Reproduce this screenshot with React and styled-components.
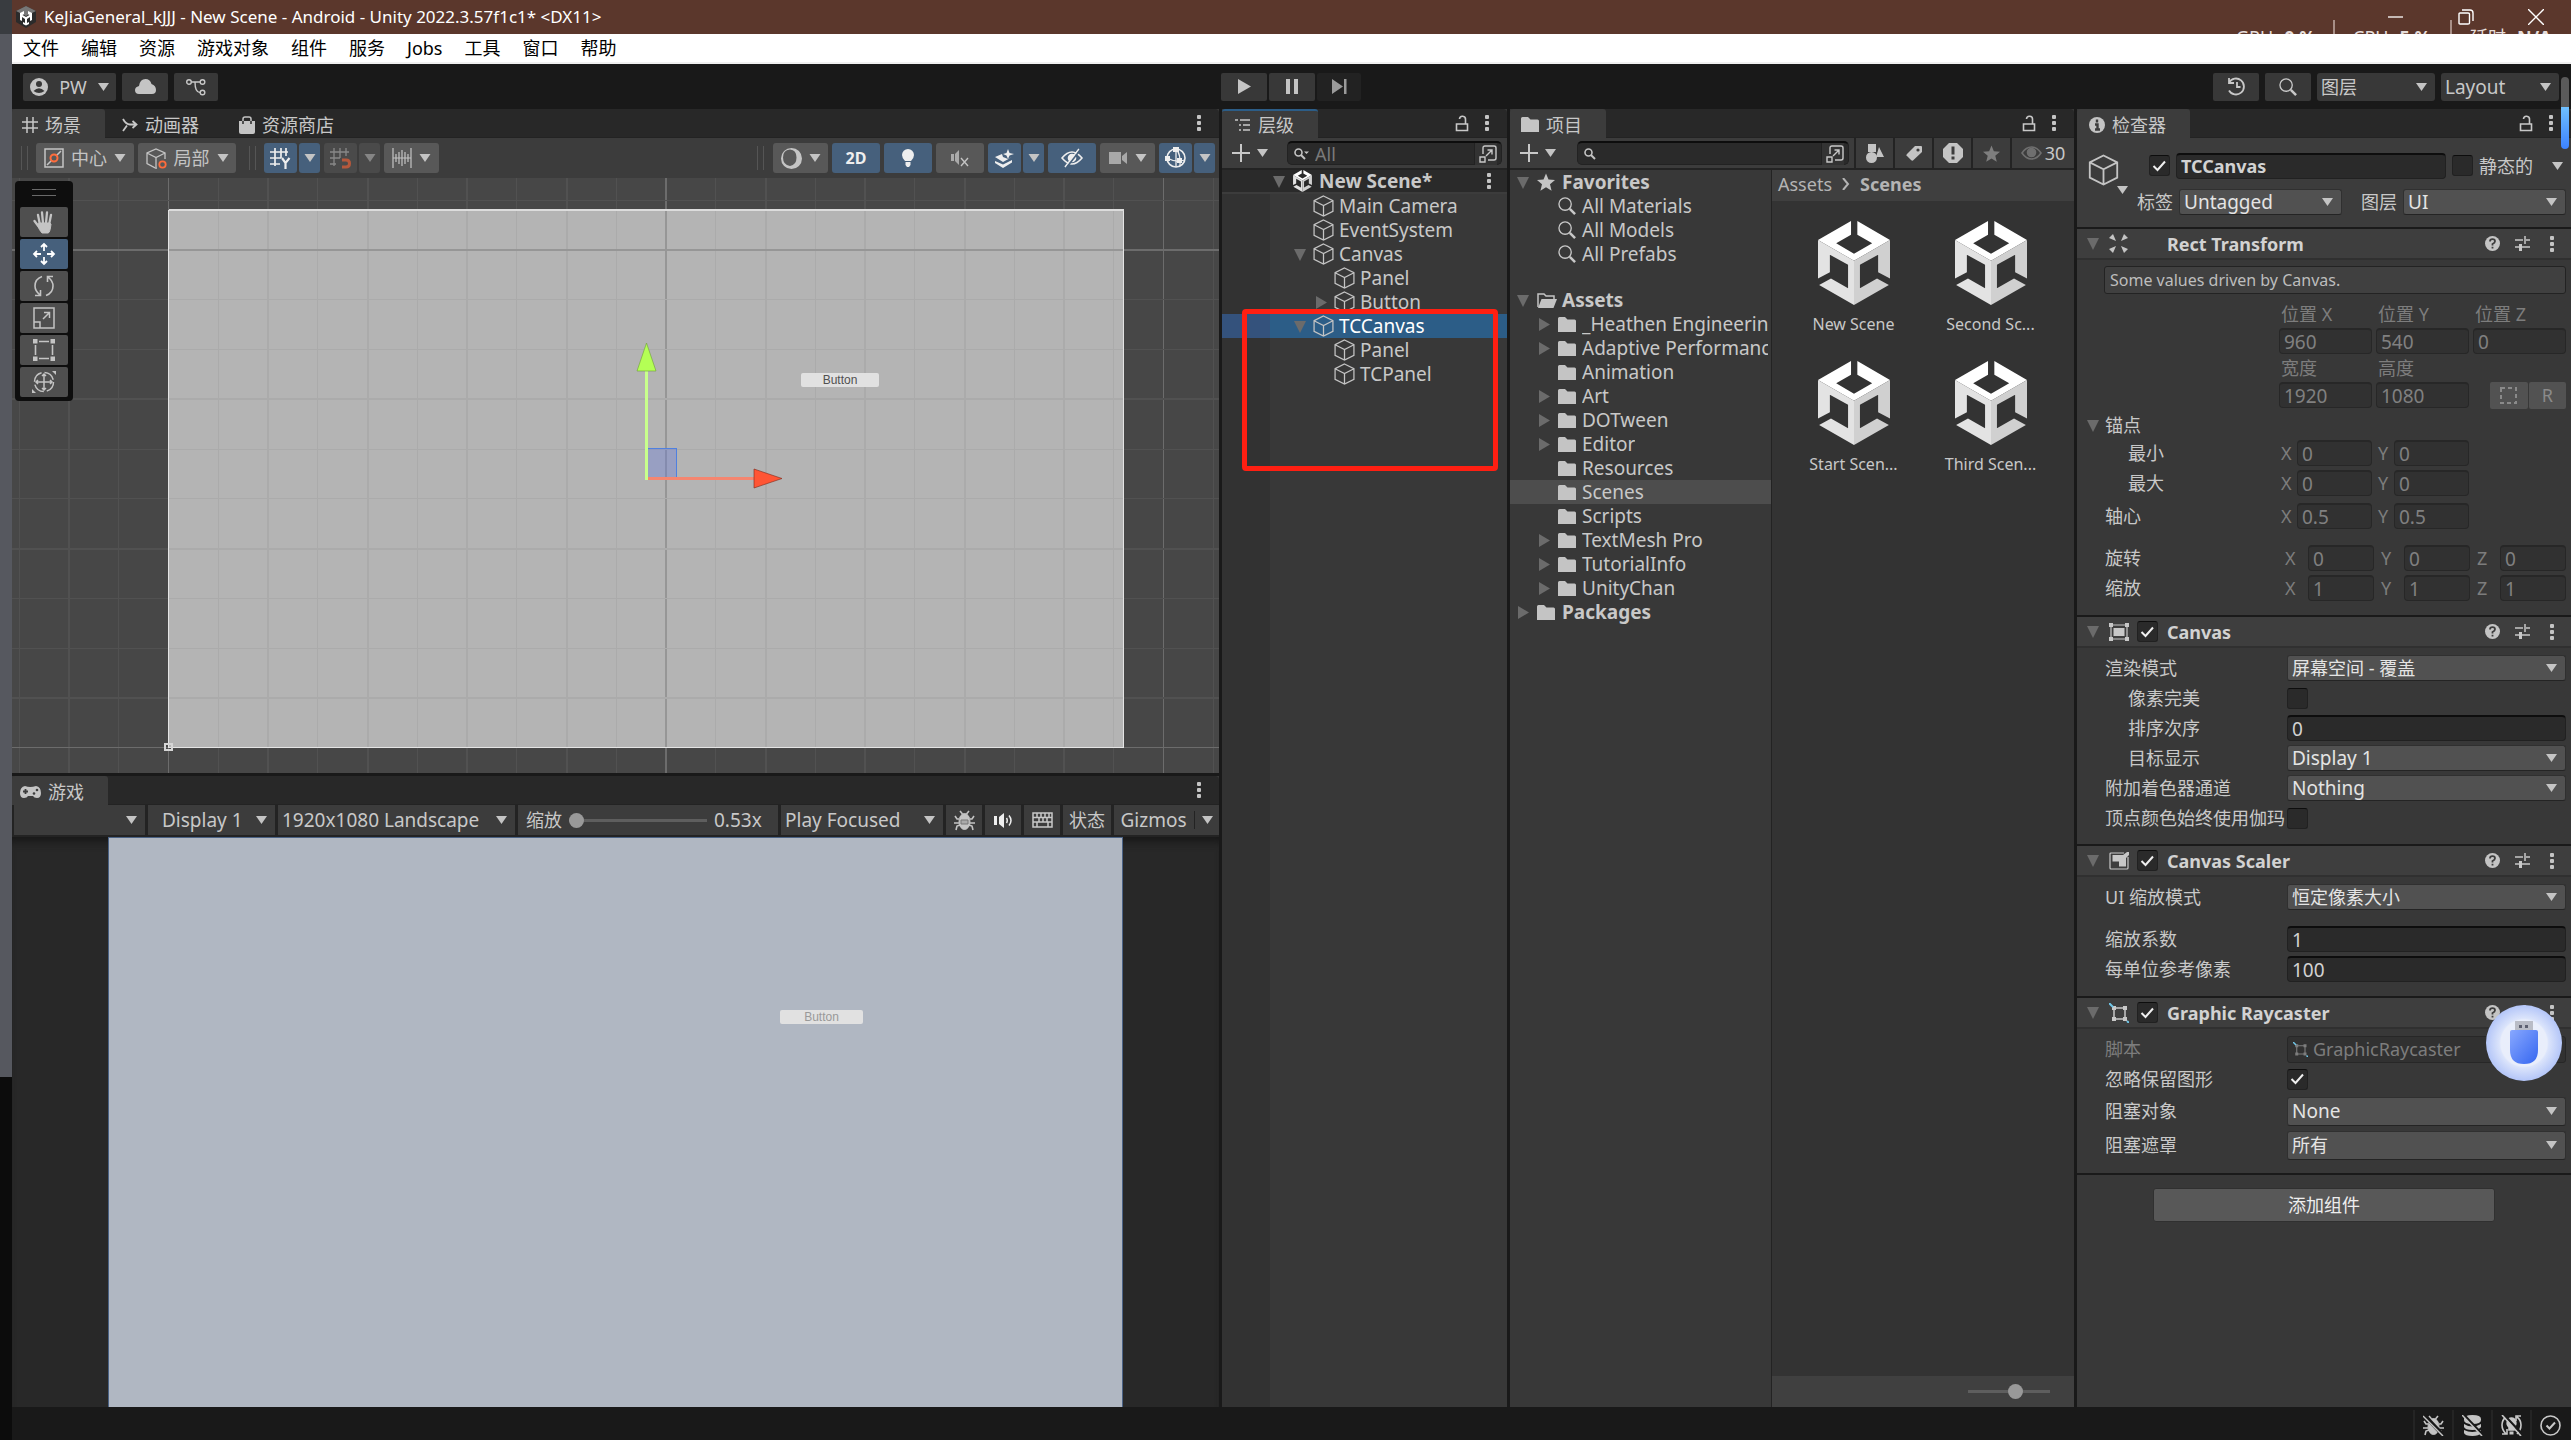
import React, { useId } from "react";
import styled, { createGlobalStyle, css } from "styled-components";

const GlobalStyle = createGlobalStyle`
  * {
    box-sizing: border-box;
  }
  body {
    margin: 0;
    background: #191919;
    color: #c8c8c8;
    font-family: "Noto Sans", "Noto Sans CJK SC", sans-serif;
    font-size: 18px;
    line-height: 24px;
  }
  button, input, select {
    margin: 0;
    padding: 0;
    border: 0;
    color: inherit;
    font: inherit;
  }
  svg {
    display: block;
    flex: none;
  }
`;

/* ---------- window ---------- */

const Screen = styled.div`
  min-height: 100vh;
  display: flex;
`;

const Edge = styled.div`
  width: 12px;
  flex: none;
  display: flex;
  flex-direction: column;
  background: #0c0c0c;
`;

const EdgeTop = styled.div`
  height: 34px;
  background: #393c40;
`;

const EdgeMiddle = styled.div`
  flex: 1043;
  background: #56585f;
`;

const EdgeBottom = styled.div`
  flex: 363;
`;

const Window = styled.div`
  flex: 1;
  min-width: 0;
  display: flex;
  flex-direction: column;
`;

const TitleBar = styled.header`
  position: relative;
  height: 34px;
  padding-left: 3px;
  display: flex;
  align-items: center;
  gap: 7px;
  overflow: hidden;
  background: #5b372c;
  color: #fff;
  font-size: 17px;
`;

const WindowButtons = styled.div`
  margin-left: auto;
  display: flex;
`;

const WindowButton = styled.button`
  width: 70px;
  height: 32px;
  display: grid;
  place-items: center;
  background: none;
`;

const Monitor = styled.div`
  position: absolute;
  top: 20px;
  right: 4px;
  display: flex;
  color: #e6dedb;
  font-size: 18px;
  line-height: 34px;
`;

const MonitorItem = styled.span`
  width: 117px;
  padding-left: 18px;
  display: flex;
  gap: 11px;
  border-left: 2px solid ${(p) => (p.$first ? "transparent" : "#a88f87")};
  white-space: nowrap;
`;

const MenuBar = styled.nav`
  height: 30px;
  padding-left: 11px;
  display: flex;
  align-items: center;
  gap: 22px;
  background: #fff;
  border-bottom: 2px solid #f0f0f0;
`;

const MenuItem = styled.button`
  background: none;
  color: #000;
`;

const MainBar = styled.div`
  height: 45px;
  padding: 0 12px 0 11px;
  display: grid;
  grid-template-columns: 1fr auto 1fr;
  align-items: center;
  background: #191919;
`;

const BarGroup = styled.div`
  display: flex;
  gap: ${(p) => p.$gap || 6}px;
  justify-content: ${(p) => (p.$end ? "flex-end" : "flex-start")};
`;

const BarButton = styled.button`
  width: ${(p) => p.$w || 46}px;
  height: 28px;
  display: flex;
  align-items: center;
  justify-content: center;
  gap: 11px;
  border-radius: 2px;
  background: ${(p) => (p.$dim ? "#222" : "#383838")};
`;

const Panels = styled.div`
  flex: 1;
  display: grid;
  grid-template-columns: 1207fr 285fr 564fr 494fr;
  gap: 3px;
`;

const Column = styled.div`
  min-width: 0;
  display: flex;
  flex-direction: column;
  gap: 3px;
`;

const Panel = styled.section`
  flex: ${(p) => p.$grow || 1} 1 0;
  min-width: 0;
  min-height: 0;
  display: flex;
  flex-direction: column;
  background: #383838;
`;

const TabBar = styled.div`
  height: 29px;
  flex: none;
  padding-right: ${(p) => p.$right || 12}px;
  display: flex;
  align-items: center;
  gap: 16px;
  background: #282828;
  border-bottom: 1px solid #232323;
  border-radius: 4px 4px 0 0;
`;

const Tabs = styled.div`
  flex: 1;
  align-self: stretch;
  margin-bottom: -1px;
  display: flex;
`;

const Tab = styled.button`
  padding: 0 ${(p) => p.$pad || 24}px 0 ${(p) => p.$left || 11}px;
  display: flex;
  align-items: center;
  gap: 7px;
  background: ${(p) => (p.$active ? "#3c3c3c" : "none")};
  border-top: 2px solid ${(p) => (p.$focus ? "#2c5d87" : "transparent")};
  border-radius: 3px 3px 0 0;
`;

const IconButton = styled.button`
  display: grid;
  place-items: center;
  background: none;
`;

/* ---------- shared controls ---------- */

const Pick = styled.label`
  min-width: 0;
  flex: ${(p) => (p.$w ? "none" : 1)};
  width: ${(p) => (p.$w ? p.$w + "px" : "auto")};
  height: ${(p) => p.$h || 26}px;
  display: grid;
  align-items: center;
  background: ${(p) => p.$bg || "#515151"};
  border: ${(p) => (p.$bg ? "0" : "1px solid #303030")};
  border-bottom-color: #242424;
  border-radius: ${(p) => (p.$flat ? 0 : 3)}px;
  font-size: ${(p) => (p.$cjk ? 18 : 19)}px;

  select {
    grid-area: 1 / 1;
    width: 100%;
    height: 24px;
    padding-left: ${(p) => p.$pad || 4}px;
    appearance: none;
    background: none;
    color: ${(p) => (p.$bg ? "#c8c8c8" : "#e4e4e4")};
    line-height: 24px;
  }
  svg {
    grid-area: 1 / 1;
    justify-self: end;
    margin-right: ${(p) => p.$right || 8}px;
    pointer-events: none;
  }
`;

const TextBox = styled.input`
  flex: 1;
  min-width: 0;
  width: 100%;
  height: 26px;
  padding: 0 4px;
  background: #2a2a2a;
  border: 1px solid #212121;
  border-top: 2px solid #0d0d0d;
  border-radius: 4px;
  color: #d2d2d2;
  font-size: 19px;
  font-weight: ${(p) => (p.$bold ? 700 : 400)};

  &:disabled {
    background: #313131;
    border-color: #272727;
    color: #808080;
  }
`;

const NameBox = styled(TextBox)`
  font-size: 18px;
`;

const TickBox = styled.span`
  width: 21px;
  height: 21px;
  flex: none;
  display: grid;

  input {
    grid-area: 1 / 1;
    width: 21px;
    height: 21px;
    appearance: none;
    background: #2a2a2a;
    border: 1px solid #212121;
    border-top-color: #0d0d0d;
    border-radius: 3px;
  }
  svg {
    grid-area: 1 / 1;
    place-self: center;
    pointer-events: none;
  }
`;

const Slider = styled.input`
  width: ${(p) => p.$w}px;
  height: 16px;
  appearance: none;
  background: linear-gradient(#5e5e5e, #5e5e5e) center / 100% 3px no-repeat;

  &::-webkit-slider-thumb {
    appearance: none;
    width: 15px;
    height: 15px;
    border-radius: 50%;
    background: #999;
  }
`;

/* ---------- icons ---------- */

const Icon = ({ s = 20, h, box = 20, children, ...rest }) => (
  <svg
    width={s}
    height={h || s}
    viewBox={`0 0 ${box} ${box}`}
    fill="none"
    stroke="currentColor"
    strokeWidth="1.6"
    {...rest}
  >
    {children}
  </svg>
);

const Down = ({ w = 11, color = "#c4c4c4" }) => (
  <svg width={w} height="8" viewBox="0 0 11 8">
    <path d="M0 0H11L5.5 8Z" fill={color} />
  </svg>
);

const Fold = ({ open }) => (
  <svg width="12" height="13" viewBox="0 0 12 13">
    <path d={open ? "M0 1H12L6 13Z" : "M1 0L12 6.5L1 13Z"} fill="#6b6b6b" />
  </svg>
);

const Kebab = () => (
  <svg width="4" height="16" viewBox="0 0 4 16" fill="#c4c4c4">
    <rect width="4" height="4" rx="1" />
    <rect y="6" width="4" height="4" rx="1" />
    <rect y="12" width="4" height="4" rx="1" />
  </svg>
);

const Lock = () => (
  <Icon s={14} h={17} viewBox="0 0 14 17">
    <path d="M1.5 9h11v6.5h-11zM10.500 9V4.500a3 3 0 0 0-6-.5" />
  </Icon>
);

const Cube = ({ s = 21 }) => (
  <Icon s={s} h={s + 1} viewBox="0 0 20 21" strokeWidth="1.2" stroke="#c4c4c4">
    <path d="M10 1L19 5.500V15.500L10 20L1 15.500V5.500ZM1 5.500L10 10L19 5.500M10 10V20" />
  </Icon>
);

const Tick = () => (
  <svg width="15" height="12" viewBox="0 0 15 12">
    <path d="M1.500 6L5.500 10L13 1.500" fill="none" stroke="#f0f0f0" strokeWidth="2" />
  </svg>
);

const UnityLogo = ({ w = 72 }) => (
  <svg width={w} height={Math.round((w * 226) / 194)} viewBox="0 0 194 226">
    <path d="M0 51L89 0V37L49 60L97 88L146 60L106 37V0L194 51L97 107Z" fill="#fff" />
    <path d="M0 51L97 107V226L3 172L35 155L81 181V118L32 91V138L0 155Z" fill="#e3e3e3" />
    <path d="M194 51L97 107V226L191 172L159 155L113 181V118L162 91V138L194 155Z" fill="#d0d0d0" />
  </svg>
);

const Folder = () => (
  <svg width="18" height="15" viewBox="0 0 18 15">
    <path d="M0 1.500Q0 0 1.500 0H7L9.500 2.500H16.500Q18 2.500 18 4V15H0Z" fill="#c4c4c4" />
  </svg>
);

const FolderOpen = () => (
  <svg width="20" height="15" viewBox="0 0 20 15">
    <path d="M1 14V1H7L9 3H17V6" fill="none" stroke="#c4c4c4" strokeWidth="1.500" />
    <path d="M4.500 6H20L16.500 15H1Z" fill="#c4c4c4" />
  </svg>
);

const Star = ({ color = "#c4c4c4", s = 18 }) => (
  <svg width={s} height={s} viewBox="0 0 18 18">
    <path d="M9 0.500L11.500 6.600L18 7.100L13 11.300L14.600 17.700L9 14.200L3.400 17.700L5 11.300L0 7.100L6.500 6.600Z" fill={color} />
  </svg>
);

const Lens = ({ s = 19 }) => (
  <Icon s={s} viewBox="0 0 19 19" strokeWidth="1.4">
    <circle cx="7.500" cy="7.500" r="6.500" />
    <path d="M12.500 12.500L18 18" strokeWidth="2.600" />
  </Icon>
);

const LensSmall = ({ menu }) => (
  <svg width="15" height="12" viewBox="0 0 15 12" fill="none" stroke="#c4c4c4">
    <circle cx="4.500" cy="4.500" r="3.500" strokeWidth="1.600" />
    <path d="M7 7L11 11" strokeWidth="2" />
    {menu && <path d="M10 3.500H15L12.500 6Z" fill="#c4c4c4" stroke="none" />}
  </svg>
);

const Plus = () => (
  <Icon s={18} viewBox="0 0 18 18" strokeWidth="2">
    <path d="M9 0V18M0 9H18" />
  </Icon>
);

const PopOut = () => (
  <Icon s={18} viewBox="0 0 18 18" strokeWidth="1.4">
    <path d="M4 9V3Q4 1 6 1H15Q17 1 17 3V13Q17 15 15 15H9M1 12H6V17H1ZM7 11L13 5M8.500 5H13V9.500" />
  </Icon>
);

const GridIcon = () => (
  <Icon s={16} viewBox="0 0 16 16" strokeWidth="1.5">
    <path d="M5 0V16M11 0V16M0 5H16M0 11H16" />
  </Icon>
);

const Animator = () => (
  <Icon s={16} viewBox="0 0 16 16" strokeWidth="1.8">
    <path d="M1 2Q4 7.500 8 7.500H14M1 14L5 8.500M10.500 4L14.500 7.500L10.500 11" />
  </Icon>
);

const Bag = () => (
  <svg width="16" height="18" viewBox="0 0 16 18">
    <path d="M0 5H16V16Q16 18 14 18H2Q0 18 0 16Z" fill="#c4c4c4" />
    <path d="M4 8V3Q4 1 6 1H10Q12 1 12 3V8" fill="none" stroke="#c4c4c4" strokeWidth="1.500" />
    <path d="M4 5V8M12 5V8" stroke="#282828" strokeWidth="1.500" />
  </svg>
);

const ListIcon = () => (
  <Icon s={16} h={14} viewBox="0 0 16 14" strokeWidth="1.6">
    <path d="M0 2H3M5 2H15M4 7H6M8 7H15M4 12H6M8 12H15" />
  </Icon>
);

const Info = () => (
  <svg width="16" height="16" viewBox="0 0 16 16">
    <circle cx="8" cy="8" r="8" fill="#c4c4c4" />
    <path d="M8 2.500V5.500M6 7.500H8.500V12.500M6 12.500H11" stroke="#3c3c3c" strokeWidth="2.400" fill="none" />
  </svg>
);

const Gamepad = () => (
  <svg width="21" height="12" viewBox="0 0 21 12">
    <path d="M5 0Q10 2 16 0Q21 1 21 7Q21 12 17 12Q14 12 13 10H8Q7 12 4 12Q0 12 0 7Q0 1 5 0Z" fill="#c4c4c4" />
    <path d="M5.500 3V8M3 5.500H8" stroke="#3c3c3c" strokeWidth="1.800" />
    <circle cx="17" cy="4" r="1.300" fill="#3c3c3c" />
    <circle cx="14" cy="7.500" r="1.300" fill="#3c3c3c" />
  </svg>
);

const Help = () => (
  <svg width="15" height="15" viewBox="0 0 15 15">
    <circle cx="7.500" cy="7.500" r="7.500" fill="#c4c4c4" />
    <path d="M5 5.500Q5 3.200 7.500 3.200Q10 3.200 10 5.300Q10 6.800 7.500 8V9.500M7.500 10.800V12.600" stroke="#3c3c3c" strokeWidth="1.800" fill="none" />
  </svg>
);

const Preset = () => (
  <Icon s={15} viewBox="0 0 15 15" strokeWidth="1.5">
    <path d="M0 4H8M11 4H15M10 0V8M0 11H4M7 11H15" />
    <path d="M5.500 8V15" strokeWidth="3" />
  </Icon>
);

const Bug = ({ off }) => (
  <svg width="21" height="21" viewBox="0 0 21 21" fill="#c4c4c4" stroke="#c4c4c4">
    <ellipse cx="10.500" cy="11.500" rx="5.500" ry="8" />
    <path d="M6 1L8.500 4M15 1L12.500 4M1 6L3 9H5M20 6L18 9H16M0 13H5M21 13H16M2 20L3 16L6 15M19 20L18 16L15 15" fill="none" strokeWidth="1.600" />
    {off ? <path d="M1 0L20 20" stroke="#191919" strokeWidth="4" /> : <path d="M7 10H14V14H7Z" fill="#aaa" stroke="#777" />}
    {off && <path d="M0 1L20 21" strokeWidth="1.500" />}
  </svg>
);

/* ---------- scene view ---------- */

const SceneTools = styled.div`
  height: 40px;
  flex: none;
  padding: 0 4px 0 9px;
  display: flex;
  align-items: center;
  gap: 4px;
  background: #3c3c3c;
`;

const Spring = styled.div`
  flex: 1;
`;

const Grip = styled.div`
  width: 7px;
  height: 24px;
  margin: 0 ${(p) => p.$after || 4}px 0 ${(p) => p.$before || 0}px;
  border: solid #555;
  border-width: 0 1px;
`;

const Split = styled.div`
  display: flex;
  gap: 2px;
`;

const ToolButton = styled.button`
  width: ${(p) => p.$w || 48}px;
  height: 30px;
  display: flex;
  align-items: center;
  justify-content: center;
  gap: 7px;
  border-radius: 3px;
  background: ${(p) => (p.$on ? "#46607c" : p.$off ? "#4a4a4a" : "#585858")};
  color: ${(p) => (p.$on ? "#eee" : "#c4c4c4")};
  font-size: ${(p) => (p.$small ? 16 : 18)}px;
  font-weight: ${(p) => (p.$small ? 700 : 400)};
`;

const SceneView = styled.div`
  position: relative;
  flex: 1;
  overflow: hidden;
  background: #474747;
`;

const SceneDrawing = styled.svg`
  position: absolute;
  inset: 0;
  width: 100%;
  height: 100%;
`;

const MiniButton = styled.button`
  position: absolute;
  left: ${(p) => p.$x}px;
  top: ${(p) => p.$y}px;
  width: ${(p) => p.$w}px;
  height: 14px;
  background: #e1e1e1;
  color: ${(p) => (p.$dim ? "#999" : "#505050")};
  border-radius: 2px;
  font-family: "Liberation Sans", sans-serif;
  font-size: 12px;
  line-height: 14px;
`;

const Palette = styled.div`
  position: absolute;
  left: 3px;
  top: 3px;
  padding: 8px 5px 4px;
  display: flex;
  flex-direction: column;
  gap: 2px;
  background: #0e0e0e;
  border-radius: 4px;
`;

const PaletteGrip = styled.div`
  width: 24px;
  height: 7px;
  margin: 0 auto 9px;
  border: solid #6a6a6a;
  border-width: 1px 0;
`;

const PaletteButton = styled.button`
  width: 48px;
  height: 30px;
  display: grid;
  place-items: center;
  background: ${(p) => (p.$on ? "#46607c" : "#4f4f4f")};
  color: ${(p) => (p.$on ? "#fff" : "#c4c4c4")};
  border-radius: 2px;
`;

const GRID = 49.75;
const columns = Array.from({ length: 26 }, (_, i) => i - 3);
const rows = Array.from({ length: 13 }, (_, i) => i - 1);

// every other line is drawn two pixels wide
const lineWidth = (k) => (k % 2 === 0 && k !== 0 ? 2 : 1);

const GridLines = ({ faint, strong }) => (
  <g shapeRendering="crispEdges">
    {columns.map((k) => (
      <path key={"c" + k} d={`M${156.5 + k * GRID} 0V2000`} stroke={k % 10 ? faint : strong} strokeWidth={k === 20 ? 1 : lineWidth(k)} />
    ))}
    {rows.map((k) => (
      <path key={"r" + k} d={`M0 ${72 + k * GRID}H3000`} stroke={k % 10 ? faint : strong} strokeWidth={k % 3 === 0 ? 2 : 1} />
    ))}
  </g>
);

const SceneCanvas = () => (
  <SceneDrawing>
    <defs>
      <clipPath id="ui-canvas">
        <rect x="157" y="32" width="955" height="537" />
      </clipPath>
    </defs>
    <GridLines faint="#515151" strong="#6c6c6c" />
    <rect x="157" y="32" width="955" height="537" fill="#b4b4b4" />
    <g clipPath="url(#ui-canvas)">
      <GridLines faint="#ababab" strong="#969696" />
    </g>
    <rect x="156.500" y="32.500" width="955" height="537" fill="none" stroke="#e4e4e4" />
    <path d="M157 32H1112" stroke="#dcdcdc" strokeWidth="2" />
    <rect x="153" y="566" width="7" height="6" fill="none" stroke="#d5d5d5" strokeWidth="2" />
    <rect x="635.500" y="270.500" width="29" height="29" fill="#6478dc" fillOpacity="0.350" stroke="#4f80e0" />
    <path d="M634.500 302V193" stroke="#c8ff8c" strokeWidth="3" />
    <path d="M636 300.500H742" stroke="#f58670" strokeWidth="3" />
    <path d="M634.500 165L644 193H625Z" fill="#b4ff55" stroke="#6f9f35" strokeWidth="0.600" />
    <path d="M770 300.500L742 291V310Z" fill="#ff5535" stroke="#7d2717" strokeWidth="0.600" />
  </SceneDrawing>
);

const paletteIcons = [
  <svg width="22" height="23" viewBox="0 0 22 23" fill="none" stroke="currentColor" strokeLinecap="round">
    <path d="M7 14L5 4M10 12L9 1.500M13 12L14 1.500M16 14L18 4M6 16L1.500 10" strokeWidth="2.300" />
    <path d="M6 12H16.500L18 13Q17 22 15 22H9Q6 19 4.500 14Z" fill="currentColor" />
  </svg>,
  <Icon s={24} viewBox="0 0 24 24" strokeWidth="1.8">
    <path d="M12 2V9M12 15V22M2 12H9M15 12H22M9 5L12 2L15 5M9 19L12 22L15 19M5 9L2 12L5 15M19 9L22 12L19 15" />
  </Icon>,
  <Icon s={22} viewBox="0 0 22 22">
    <path d="M9 1.500Q2 4 2 11Q2 16 7 20M2 20.500H7.500V15M13 20.500Q20 18 20 11Q20 6 15 2M20 1.500H14.500V7" />
  </Icon>,
  <Icon s={22} viewBox="0 0 22 22" strokeWidth="1.5">
    <path d="M1 1H21V21H1ZM1 15H7V21M10 12L16 6M11 5.500H16.500V11" />
  </Icon>,
  <Icon s={22} viewBox="0 0 22 22">
    <path d="M6 2.500H16M6 19.500H16M2.500 6V16M19.500 6V16" />
    <path d="M0 0H4.500V4.500H0ZM17.500 0H22V4.500H17.500ZM0 17.500H4.500V22H0ZM17.500 17.500H22V22H17.500Z" fill="currentColor" stroke="none" />
  </Icon>,
  <Icon s={24} viewBox="0 0 24 24" strokeWidth="1.5">
    <circle cx="12" cy="12" r="9.500" strokeDasharray="12 3" />
    <path d="M12 4V20M4 12H20M10 6L12 4L14 6M10 18L12 20L14 18M6 10L4 12L6 14M18 10L20 12L18 14" />
    <path d="M20 1H24V5ZM0 19V23H4Z" fill="currentColor" stroke="none" />
  </Icon>,
];
const paletteNames = ["View", "Move", "Rotate", "Scale", "Rect", "Transform"];

const ScenePanel = () => (
  <Panel $grow={664}>
    <TabBar $right={18}>
      <Tabs>
        <Tab $active $left={10}>
          <GridIcon />
          场景
        </Tab>
        <Tab $left={17} $pad={24}>
          <Animator />
          动画器
        </Tab>
        <Tab $left={16}>
          <Bag />
          资源商店
        </Tab>
      </Tabs>
      <IconButton aria-label="Scene menu">
        <Kebab />
      </IconButton>
    </TabBar>
    <SceneTools>
      <Grip />
      <ToolButton $w={98}>
        <Icon s={20} strokeWidth="1.5">
          <path d="M1 1H19V19H1ZM3 17L8 12M12 8L17 3" />
          <circle cx="10" cy="10" r="3.500" stroke="#ff6c3c" strokeWidth="2" />
        </Icon>
        中心
        <Down w={12} />
      </ToolButton>
      <ToolButton $w={98}>
        <Icon s={21} viewBox="0 0 21 21" strokeWidth="1.3">
          <path d="M11 20L9.500 20L1 15.500V5L10 1L19 5V11M1 5L10 9.500L19 5M10 9.500V19" />
          <circle cx="16.500" cy="16.500" r="3.200" stroke="#ff6c3c" strokeWidth="1.800" />
        </Icon>
        局部
        <Down w={12} />
      </ToolButton>
      <Grip $before={9} />
      <Split>
        <ToolButton $w={33} $on aria-label="Grid">
          <Icon s={21} viewBox="0 0 21 21" strokeWidth="1.7">
            <path d="M5 0V18M11 0V10M16 0V8M0 4H18M0 10H11M0 16H10" />
            <path d="M12 10L15.500 15L19.500 10M15.500 15V21" strokeWidth="2.200" />
          </Icon>
        </ToolButton>
        <ToolButton $w={21} $on aria-label="Grid options">
          <Down w={12} />
        </ToolButton>
      </Split>
      <Split>
        <ToolButton $w={33} $off aria-label="Snap">
          <Icon s={21} viewBox="0 0 21 21" strokeWidth="1.3" stroke="#888">
            <path d="M4 0V18M10 0V10M16 0V8M0 4H19M0 10H10M0 16H6" />
            <path d="M12 12H16Q19.500 12 19.500 15.500Q19.500 19 16 19H12" stroke="#b5583c" strokeWidth="3" />
          </Icon>
        </ToolButton>
        <ToolButton $w={21} $off aria-label="Snap options">
          <Down w={12} color="#858585" />
        </ToolButton>
      </Split>
      <ToolButton $w={55} aria-label="Snap increment">
        <Icon s={20} strokeWidth="1.2">
          <path d="M1 0V20M19 0V20M4 6V14M7 4V16M10 2V18M13 4V16M16 6V14M1 10H19" />
        </Icon>
        <Down w={12} />
      </ToolButton>
      <Spring />
      <Grip $after={5} />
      <ToolButton $w={55} aria-label="Draw mode">
        <svg width="21" height="21" viewBox="0 0 21 21">
          <path d="M10.500 0A10.500 10.500 0 1 0 10.500 21A10.500 10.500 0 0 0 10.500 0M9 1.500Q15.500 2 15.500 9.500Q15.500 17 9 18Q2 17 2 9.500Q2 2 9 1.500" fill="#c4c4c4" fillRule="evenodd" />
        </svg>
        <Down w={12} />
      </ToolButton>
      <ToolButton $on $small>2D</ToolButton>
      <ToolButton $on aria-label="Lighting">
        <svg width="12" height="18" viewBox="0 0 12 18" fill="#eee">
          <path d="M6 0A6 6 0 0 1 12 6Q12 9 9 12H3Q0 9 0 6A6 6 0 0 1 6 0M3.500 13H8.500V16L7 18H5L3.500 16Z" />
        </svg>
      </ToolButton>
      <ToolButton aria-label="Audio">
        <Icon s={18} viewBox="0 0 18 18">
          <path d="M0 5H3V12H0ZM4 5L8 1V16L4 12Z" fill="#aaa" stroke="none" />
          <path d="M10 9L17 17M17 9L10 17" strokeWidth="1.400" />
        </Icon>
      </ToolButton>
      <Split>
        <ToolButton $w={33} $on aria-label="Effects">
          <svg width="19" height="19" viewBox="0 0 19 19" fill="#eee">
            <path d="M0 8L7 5L8 8L13 10L17 8L8 13ZM0 12L8 15.500L17 11V13.500L8 19L0 14Z" />
            <path d="M13 0L14.500 4L19 5L14.500 6.500L13 10L11.500 6.500L8 5L11.500 4Z" />
          </svg>
        </ToolButton>
        <ToolButton $w={21} $on aria-label="Effects options">
          <Down w={12} />
        </ToolButton>
      </Split>
      <ToolButton $on aria-label="Visibility">
        <Icon s={22} viewBox="0 0 22 22" strokeWidth="1.6">
          <path d="M1 11Q6 5 11 5Q16 5 21 11Q16 17 11 17Q6 17 1 11ZM4 20L18 2" />
          <circle cx="11" cy="11" r="3.500" fill="#eee" />
          <path d="M6 20L20 2" stroke="#46607c" />
        </Icon>
      </ToolButton>
      <ToolButton $w={55} aria-label="Camera">
        <svg width="19" height="14" viewBox="0 0 19 14" fill="#a8a8a8">
          <path d="M0 1H12V13H0ZM13 5L18 1V13L13 9Z" />
        </svg>
        <Down w={12} />
      </ToolButton>
      <Split>
        <ToolButton $w={33} $on aria-label="Gizmos">
          <Icon s={22} viewBox="0 0 22 22">
            <circle cx="11" cy="11" r="9" />
            <path d="M11 2V20M2 11Q11 16 20 13M11 2Q16 7 15 19" strokeWidth="1.300" />
            <path d="M8 0H14V5H8ZM0 9H5V14H0ZM12 11H17V16H12Z" fill="#eee" stroke="none" />
          </Icon>
        </ToolButton>
        <ToolButton $w={21} $on aria-label="Gizmo options">
          <Down w={12} />
        </ToolButton>
      </Split>
    </SceneTools>
    <SceneView>
      <SceneCanvas />
      <MiniButton $x={789} $y={195} $w={78}>Button</MiniButton>
      <Palette>
        <PaletteGrip />
        {paletteIcons.map((icon, i) => (
          <PaletteButton key={i} $on={i === 1} aria-label={paletteNames[i]}>
            {icon}
          </PaletteButton>
        ))}
      </Palette>
    </SceneView>
  </Panel>
);

/* ---------- game view ---------- */

const GameTools = styled.div`
  height: 32px;
  flex: none;
  padding: 0 0 2px 2px;
  display: flex;
  gap: 3px;
  background: #232323;
  font-size: 19px;
`;

const GameCell = styled.div`
  flex: ${(p) => (p.$grow ? 1 : "none")};
  padding: 0 14px 0 8px;
  display: flex;
  align-items: center;
  gap: 7px;
  background: #3c3c3c;
  white-space: nowrap;

  label {
    flex: none;
    font-size: 18px;
  }
`;

const GameButton = styled.button`
  width: ${(p) => p.$w || 36}px;
  display: flex;
  align-items: center;
  justify-content: center;
  gap: 7px;
  background: #3c3c3c;
  font-size: ${(p) => (p.$cjk ? 18 : 19)}px;
`;

const Divider = styled.span`
  width: 1px;
  height: 18px;
  background: #232323;
`;

const GameView = styled.div`
  flex: 1;
  padding: 0 96px;
  display: flex;
  background: #282828;
  box-shadow: inset 0 10px 10px -6px #161616;
`;

const GameImage = styled.div`
  position: relative;
  flex: 1;
  background: #b0b7c2;
  border: 1px solid #4a6285;
  border-bottom: 0;
`;

const Picker = ({ value, name, ...rest }) => (
  <Pick {...rest}>
    <select defaultValue={value} aria-label={name || value}>
      <option>{value}</option>
    </select>
    <Down />
  </Pick>
);

const GamePanel = () => {
  const zoomId = useId();
  return (
    <Panel $grow={631}>
      <TabBar $right={18}>
        <Tabs>
          <Tab $active $left={8}>
            <Gamepad />
            游戏
          </Tab>
        </Tabs>
        <IconButton aria-label="Game menu">
          <Kebab />
        </IconButton>
      </TabBar>
      <GameTools>
        <Picker value="" name="View" $w={131} $h={30} $bg="#3c3c3c" $flat />
        <Picker value="Display 1" $w={127} $h={30} $bg="#3c3c3c" $flat $pad={14} />
        <Picker value="1920x1080 Landscape" $w={237} $h={30} $bg="#3c3c3c" $flat />
        <GameCell $grow>
          <label htmlFor={zoomId}>缩放</label>
          <Slider id={zoomId} type="range" defaultValue="0" $w={138} />
          0.53x
        </GameCell>
        <Picker value="Play Focused" $w={162} $h={30} $bg="#3c3c3c" $flat />
        <GameButton aria-label="Debug">
          <Bug />
        </GameButton>
        <GameButton aria-label="Mute">
          <svg width="19" height="15" viewBox="0 0 19 15" fill="#eee">
            <path d="M0 3H3V12H0ZM5 4L10 0V15L5 11Z" />
            <path d="M12.500 5Q14 7.500 12.500 10M15 2.500Q19 7.500 15 12.500" fill="none" stroke="#eee" strokeWidth="1.500" />
          </svg>
        </GameButton>
        <GameButton aria-label="Shortcuts">
          <Icon s={21} h={16} viewBox="0 0 21 16" strokeWidth="1.5">
            <path d="M1 1H20V15H1ZM1 5.500H20M1 10H20M5 1V5.500M9 1V5.500M13 1V5.500M17 1V5.500M7 5.500V10M11 5.500V10M15 5.500V10M5 10V15M16 10V15" />
          </Icon>
        </GameButton>
        <GameButton $w={48} $cjk>状态</GameButton>
        <GameButton $w={105}>
          Gizmos
          <Divider />
          <Down />
        </GameButton>
      </GameTools>
      <GameView>
        <GameImage>
          <MiniButton $x={671} $y={172} $w={83} $dim>Button</MiniButton>
        </GameImage>
      </GameView>
    </Panel>
  );
};

/* ---------- hierarchy ---------- */

const ListTools = styled.div`
  height: 32px;
  flex: none;
  display: flex;
  background: #3c3c3c;
  border-bottom: 2px solid #232323;
`;

const AddButton = styled.button`
  width: ${(p) => p.$w}px;
  flex: none;
  padding-left: 10px;
  display: flex;
  align-items: center;
  gap: 7px;
  background: none;
`;

const SearchBox = styled.label`
  flex: 1;
  min-width: 0;
  height: 24px;
  margin: 3px 5px 0 0;
  padding: 0 4px 0 6px;
  display: flex;
  align-items: center;
  gap: 6px;
  background: #2a2a2a;
  border: 1px solid #222;
  border-top: 2px solid #0d0d0d;
  border-radius: 5px;

  input {
    flex: 1;
    min-width: 0;
    background: none;
    line-height: 20px;
  }
  input::placeholder {
    color: #7a7a7a;
  }
`;

const SearchPop = styled.button`
  height: 22px;
  padding-left: 4px;
  display: grid;
  place-items: center;
  background: #333;
  border-left: 1px solid #222;
`;

const HierarchyBody = styled.div`
  position: relative;
  flex: 1;
  background: linear-gradient(90deg, #323232 48px, #383838 48px);
`;

const TreeRow = styled.div`
  height: 24px;
  padding: 0 16px 0 ${(p) => p.$start}px;
  display: flex;
  align-items: center;
  overflow: hidden;
  white-space: nowrap;
  font-size: 19px;
  font-weight: ${(p) => (p.$bold ? 700 : 400)};
  color: ${(p) => (p.$selected ? "#fff" : "#c8c8c8")};
  ${(p) =>
    p.$selected &&
    css`
      background: linear-gradient(90deg, #34527c 48px, #2c5d87 48px);
    `}
  ${(p) =>
    p.$scene &&
    css`
      background: #2a2a2a;
      border-bottom: 2px solid #3c3c3c;
    `}
  ${(p) =>
    p.$active &&
    css`
      background: #4d4d4d;
    `}
`;

const FoldSlot = styled.span`
  width: ${(p) => p.$w}px;
  flex: none;
  padding-left: 2px;
`;

const IconSlot = styled.span`
  width: ${(p) => p.$w}px;
  flex: none;
`;

const Marker = styled.div`
  position: absolute;
  left: 20px;
  top: 139px;
  width: 256px;
  height: 162px;
  border: 5px solid #ff1f12;
  border-radius: 4px;
  pointer-events: none;
`;

const objects = [
  { name: "Main Camera", depth: 1 },
  { name: "EventSystem", depth: 1 },
  { name: "Canvas", depth: 1, fold: "open" },
  { name: "Panel", depth: 2 },
  { name: "Button", depth: 2, fold: "closed" },
  { name: "TCCanvas", depth: 1, fold: "open", selected: true },
  { name: "Panel", depth: 2 },
  { name: "TCPanel", depth: 2 },
];

const HierarchyPanel = () => (
  <Panel>
    <TabBar $right={18}>
      <Tabs>
        <Tab $active $focus $left={13}>
          <ListIcon />
          层级
        </Tab>
      </Tabs>
      <IconButton aria-label="Lock hierarchy">
        <Lock />
      </IconButton>
      <IconButton aria-label="Hierarchy menu">
        <Kebab />
      </IconButton>
    </TabBar>
    <ListTools>
      <AddButton $w={65} aria-label="Create object">
        <Plus />
        <Down />
      </AddButton>
      <SearchBox>
        <LensSmall menu />
        <input placeholder="All" aria-label="Search hierarchy" />
        <SearchPop aria-label="Open search">
          <PopOut />
        </SearchPop>
      </SearchBox>
    </ListTools>
    <HierarchyBody>
      <TreeRow $start={49} $bold $scene>
        <FoldSlot $w={22}>
          <Fold open />
        </FoldSlot>
        <IconSlot $w={26}>
          <UnityLogo w={19} />
        </IconSlot>
        New Scene*
        <Spring />
        <Kebab />
      </TreeRow>
      {objects.map((o, i) => (
        <TreeRow key={i} $start={49 + o.depth * 21} $selected={o.selected}>
          <FoldSlot $w={21}>{o.fold && <Fold open={o.fold === "open"} />}</FoldSlot>
          <IconSlot $w={26}>
            <Cube />
          </IconSlot>
          {o.name}
        </TreeRow>
      ))}
      <Marker />
    </HierarchyBody>
  </Panel>
);

/* ---------- project ---------- */

const FilterButton = styled.button`
  width: ${(p) => p.$w || 39}px;
  flex: none;
  display: flex;
  align-items: center;
  justify-content: center;
  gap: 3px;
  background: #3c3c3c;
  border-left: 2px solid #232323;
`;

const ProjectBody = styled.div`
  flex: 1;
  display: grid;
  grid-template-columns: 262fr 302fr;
`;

const Tree = styled.div`
  min-width: 0;
  border-right: 1px solid #232323;
`;

const TreeGap = styled.div`
  height: 22px;
`;

const TreeName = styled.span`
  overflow: hidden;
`;

const ProjectRow = styled(TreeRow)`
  padding-right: 3px;
`;

const Browser = styled.div`
  min-width: 0;
  display: flex;
  flex-direction: column;
  background: #333;
`;

const Crumbs = styled.div`
  height: 31px;
  padding: 0 0 4px 6px;
  display: flex;
  align-items: center;
  gap: 10px;
  background: #3f3f3f;
  font-size: 18px;
  color: #b4b4b4;
`;

const AssetGrid = styled.div`
  flex: 1;
  padding: 20px 13px;
  display: grid;
  grid-template-columns: repeat(auto-fill, 137px);
  grid-auto-rows: 140px;
`;

const Asset = styled.figure`
  margin: 0;
  display: flex;
  flex-direction: column;
  align-items: center;
  gap: 7px;
  font-size: 16px;
`;

const BrowserFoot = styled.div`
  height: 31px;
  padding-right: 24px;
  display: flex;
  align-items: center;
  justify-content: flex-end;
  background: #404040;
`;

const folders = [
  ["_Heathen Engineering", true],
  ["Adaptive Performance", true],
  ["Animation"],
  ["Art", true],
  ["DOTween", true],
  ["Editor", true],
  ["Resources"],
  ["Scenes"],
  ["Scripts"],
  ["TextMesh Pro", true],
  ["TutorialInfo", true],
  ["UnityChan", true],
];

const RootRow = ({ open, icon, name }) => (
  <ProjectRow $start={5} $bold>
    <FoldSlot $w={22}>
      <Fold open={open} />
    </FoldSlot>
    <IconSlot $w={25}>{icon}</IconSlot>
    {name}
  </ProjectRow>
);

const ProjectPanel = () => (
  <Panel>
    <TabBar $right={18}>
      <Tabs>
        <Tab $active>
          <Folder />
          项目
        </Tab>
      </Tabs>
      <IconButton aria-label="Lock project">
        <Lock />
      </IconButton>
      <IconButton aria-label="Project menu">
        <Kebab />
      </IconButton>
    </TabBar>
    <ListTools>
      <AddButton $w={67} aria-label="Create asset">
        <Plus />
        <Down />
      </AddButton>
      <SearchBox>
        <LensSmall />
        <input aria-label="Search project" />
        <SearchPop aria-label="Open project search">
          <PopOut />
        </SearchPop>
      </SearchBox>
      <FilterButton aria-label="Filter by type">
        <svg width="18" height="19" viewBox="0 0 18 19" fill="#c4c4c4">
          <path d="M2 0H10V8H2ZM13 3L18 13H10Z" />
          <circle cx="5.500" cy="13.500" r="5.500" />
        </svg>
      </FilterButton>
      <FilterButton aria-label="Filter by label">
        <svg width="16" height="15" viewBox="0 0 16 15">
          <path d="M9 0H15Q16 0 16 1V6L7 14.500Q6 15 5 14L0.500 9.500Q0 9 1 8Z" fill="#c4c4c4" />
          <circle cx="12" cy="4" r="1.600" fill="#3c3c3c" />
        </svg>
      </FilterButton>
      <FilterButton aria-label="Filter by importance">
        <svg width="20" height="20" viewBox="0 0 20 20">
          <path d="M6 0H14L20 6V14L14 20H6L0 14V6Z" fill="#c4c4c4" />
          <path d="M10 3.500V11.500M10 13.500V16.500" stroke="#3c3c3c" strokeWidth="3" />
        </svg>
      </FilterButton>
      <FilterButton aria-label="Save search">
        <Star color="#7e7e7e" s={17} />
      </FilterButton>
      <FilterButton $w={64}>
        <Icon s={21} h={14} viewBox="0 0 21 14" stroke="#6f6f6f">
          <path d="M1 7Q5 1 10.500 1Q16 1 20 7Q16 13 10.500 13Q5 13 1 7Z" />
          <circle cx="10.500" cy="6.500" r="4" fill="#6f6f6f" />
        </Icon>
        30
      </FilterButton>
    </ListTools>
    <ProjectBody>
      <Tree>
        <RootRow open icon={<Star />} name="Favorites" />
        {["All Materials", "All Models", "All Prefabs"].map((name) => (
          <ProjectRow key={name} $start={48}>
            <IconSlot $w={24}>
              <Lens s={18} />
            </IconSlot>
            {name}
          </ProjectRow>
        ))}
        <TreeGap />
        <RootRow open icon={<FolderOpen />} name="Assets" />
        {folders.map(([name, fold]) => (
          <ProjectRow key={name} $start={26} $active={name === "Scenes"}>
            <FoldSlot $w={22}>{fold && <Fold />}</FoldSlot>
            <IconSlot $w={24}>
              <Folder />
            </IconSlot>
            <TreeName>{name}</TreeName>
          </ProjectRow>
        ))}
        <RootRow icon={<Folder />} name="Packages" />
      </Tree>
      <Browser>
        <Crumbs>
          Assets
          <Icon s={8} h={12} viewBox="0 0 8 12" strokeWidth="2">
            <path d="M1 0L6 6L1 12" />
          </Icon>
          <b>Scenes</b>
        </Crumbs>
        <AssetGrid>
          {["New Scene", "Second Sc...", "Start Scen...", "Third Scen..."].map((name) => (
            <Asset key={name}>
              <UnityLogo />
              <figcaption>{name}</figcaption>
            </Asset>
          ))}
        </AssetGrid>
        <BrowserFoot>
          <Slider type="range" defaultValue="60" $w={82} aria-label="Icon size" />
        </BrowserFoot>
      </Browser>
    </ProjectBody>
  </Panel>
);

/* ---------- inspector ---------- */

const ObjectHead = styled.div`
  height: 89px;
  padding: 14px 5px 0 11px;
  display: flex;
  background: #3c3c3c;
`;

const ObjectIcon = styled.div`
  width: 49px;
  flex: none;
  padding-top: 2px;

  svg + svg {
    margin-left: 29px;
  }
`;

const ObjectRows = styled.div`
  flex: 1;
  min-width: 0;
  display: flex;
  flex-direction: column;
  gap: 9px;
`;

const ObjectRow = styled.div`
  height: 27px;
  padding: 0 ${(p) => (p.$top ? 3 : 0)}px 0 ${(p) => (p.$top ? 12 : 0)}px;
  display: flex;
  align-items: center;
  gap: 6px;
`;

const StaticLabel = styled.label`
  flex: none;
`;

const TagPair = styled.div`
  flex: 1;
  min-width: 0;
  display: flex;
  align-items: center;
  gap: 6px;

  & + & {
    margin-left: 13px;
  }
`;

const Arrow = styled.span`
  margin-left: 13px;
`;

const CompHead = styled.div`
  height: 33px;
  flex: none;
  padding: 0 17px 0 10px;
  display: flex;
  align-items: center;
  background: #3e3e3e;
  border-top: 2px solid #1a1a1a;
  border-bottom: 2px solid #303030;
`;

const CompIcon = styled.span`
  width: 28px;
  margin-left: 10px;
`;

const CompTitle = styled.h2`
  flex: 1;
  margin: 0 0 0 9px;
  font-size: 18px;
  font-weight: 700;
  line-height: 24px;
  color: #d2d2d2;
`;

const TickSlot = styled.span`
  width: 21px;
`;

const CompActions = styled.div`
  display: flex;
  align-items: center;
  gap: 15px;

  svg:last-child {
    margin-left: 5px;
  }
`;

const CompBody = styled.div`
  padding: 5px 5px ${(p) => p.$end || 11}px 0;
`;

const Row = styled.div`
  height: ${(p) => p.$h || 30}px;
  margin-top: ${(p) => p.$space || 0}px;
  padding-left: ${(p) => p.$in || 28}px;
  display: flex;
  align-items: center;
`;

const RowLabel = styled.label`
  width: ${(p) => p.$w}px;
  flex: none;
  padding-right: 5px;
  overflow: hidden;
  white-space: nowrap;
  color: ${(p) => (p.$dim ? "#7d7d7d" : "#c8c8c8")};
`;

const HelpBox = styled.div`
  flex: 1;
  height: 28px;
  padding-left: 5px;
  background: #404040;
  border: 1px solid #232323;
  border-radius: 3px;
  font-size: 16px;
  line-height: 26px;
  color: #bdbdbd;
`;

const Triple = styled.div`
  flex: 1;
  display: grid;
  grid-template-columns: repeat(3, 1fr);
  gap: ${(p) => p.$gap || 4}px;
  align-items: center;
  color: #7d7d7d;
`;

const AxisCell = styled.label`
  display: flex;
  align-items: center;
`;

const AxisName = styled.span`
  width: ${(p) => p.$w}px;
  padding-left: ${(p) => p.$pad || 0}px;
  flex: none;
`;

const ColumnName = styled.label`
  padding-left: 2px;
`;

const RectButtons = styled.div`
  margin-left: 17px;
  display: flex;
  gap: 1px;

  button {
    flex: 1;
    height: 27px;
    display: grid;
    place-items: center;
    background: #525252;
    border-radius: 2px;
    color: #8a8a8a;
  }
`;

const ObjectField = styled.div`
  flex: 1;
  height: 27px;
  padding-left: 5px;
  display: flex;
  align-items: center;
  gap: 5px;
  background: #313131;
  border: 1px solid #272727;
  border-radius: 3px;
  color: #7d7d7d;
`;

const AddComponent = styled.button`
  width: 342px;
  height: 34px;
  margin: 13px auto 0;
  background: #585858;
  border: 1px solid #303030;
  border-radius: 3px;
  color: #eee;
`;

const Rule = styled.div`
  height: 2px;
  background: #1a1a1a;
`;

const Check = ({ on, ...rest }) => (
  <TickBox>
    <input type="checkbox" defaultChecked={on} {...rest} />
    {on && <Tick />}
  </TickBox>
);

const CompTitleBar = ({ icon, title, tick }) => (
  <CompHead>
    <Fold open />
    <CompIcon>{icon}</CompIcon>
    <TickSlot>{tick && <Check on aria-label={title} />}</TickSlot>
    <CompTitle>{title}</CompTitle>
    <CompActions>
      <Help />
      <Preset />
      <Kebab />
    </CompActions>
  </CompHead>
);

const Field = ({ label, kind, value, child, space, tall, cjk }) => {
  const id = useId();
  return (
    <Row $in={child ? 51 : 28} $space={space} $h={tall ? 34 : 30}>
      <RowLabel htmlFor={id} $w={child ? 159 : 182}>
        {label}
      </RowLabel>
      {kind === "select" && (
        <Pick $cjk={cjk} $h={tall ? 29 : 26}>
          <select id={id} defaultValue={value}>
            <option>{value}</option>
          </select>
          <Down />
        </Pick>
      )}
      {kind === "text" && <TextBox id={id} defaultValue={value} />}
      {kind === "check" && <Check id={id} on={value} />}
    </Row>
  );
};

const AxisRow = ({ label, values, axes, child, space, wide }) => (
  <Row $in={child ? 51 : 28} $space={space}>
    <RowLabel as="span" $w={(wide ? 180 : 174) - (child ? 23 : 0)}>
      {label}
    </RowLabel>
    <Triple $gap={wide ? 7 : 4}>
      {values.map((v, i) => (
        <AxisCell key={i}>
          <AxisName $w={wide ? 23 : 18} $pad={wide ? 0 : 2}>
            {axes[i]}
          </AxisName>
          <TextBox disabled defaultValue={v} />
        </AxisCell>
      ))}
    </Triple>
  </Row>
);

const RayIcon = ({ s = 20 }) => (
  <Icon s={s} strokeWidth="1.5">
    <path d="M5 5H16V16H5Z" />
    <path d="M3 3H7V7H3ZM14 3H18V7H14ZM3 14H7V18H3ZM14 14H18V18H14Z" fill="currentColor" stroke="none" />
    <path d="M0 0L4 4M18 18L20 20" stroke="#6fc6e8" strokeWidth="2" />
  </Icon>
);

const InspectorPanel = () => {
  const ids = { st: useId(), x: useId(), y: useId(), z: useId(), w: useId(), h: useId() };
  return (
    <Panel>
      <TabBar $right={18}>
        <Tabs>
          <Tab $active $left={12}>
            <Info />
            检查器
          </Tab>
        </Tabs>
        <IconButton aria-label="Lock inspector">
          <Lock />
        </IconButton>
        <IconButton aria-label="Inspector menu">
          <Kebab />
        </IconButton>
      </TabBar>
      <ObjectHead>
        <ObjectIcon>
          <Cube s={31} />
          <Down />
        </ObjectIcon>
        <ObjectRows>
          <ObjectRow $top>
            <Check on aria-label="Active" />
            <NameBox $bold defaultValue="TCCanvas" aria-label="Name" />
            <Check id={ids.st} />
            <StaticLabel htmlFor={ids.st}>静态的</StaticLabel>
            <Arrow>
              <Down />
            </Arrow>
          </ObjectRow>
          <ObjectRow>
            <TagPair>
              <span>标签</span>
              <Picker value="Untagged" name="标签" />
            </TagPair>
            <TagPair>
              <span>图层</span>
              <Picker value="UI" name="图层" />
            </TagPair>
          </ObjectRow>
        </ObjectRows>
      </ObjectHead>

      <CompTitleBar
        title="Rect Transform"
        icon={
          <svg width="19" height="19" viewBox="0 0 19 19" fill="#c4c4c4">
            <path d="M0 4L4 0L7 7ZM19 4L15 0L12 7ZM0 15L4 19L7 12ZM19 15L15 19L12 12Z" />
          </svg>
        }
      />
      <CompBody $end={12}>
        <Row $in={27}>
          <HelpBox>Some values driven by Canvas.</HelpBox>
        </Row>
        <Row $in={202} $space={6} $h={26}>
          <Triple>
            <ColumnName htmlFor={ids.x}>位置 X</ColumnName>
            <ColumnName htmlFor={ids.y}>位置 Y</ColumnName>
            <ColumnName htmlFor={ids.z}>位置 Z</ColumnName>
          </Triple>
        </Row>
        <Row $in={202} $h={28}>
          <Triple>
            <TextBox id={ids.x} disabled defaultValue="960" />
            <TextBox id={ids.y} disabled defaultValue="540" />
            <TextBox id={ids.z} disabled defaultValue="0" />
          </Triple>
        </Row>
        <Row $in={202} $h={26}>
          <Triple>
            <ColumnName htmlFor={ids.w}>宽度</ColumnName>
            <ColumnName htmlFor={ids.h}>高度</ColumnName>
          </Triple>
        </Row>
        <Row $in={202} $h={28}>
          <Triple>
            <TextBox id={ids.w} disabled defaultValue="1920" />
            <TextBox id={ids.h} disabled defaultValue="1080" />
            <RectButtons>
              <button aria-label="Blueprint mode">
                <Icon s={17} viewBox="0 0 17 17" strokeWidth="2">
                  <path d="M1 1H16V16H1Z" strokeDasharray="4 3" />
                </Icon>
              </button>
              <button>R</button>
            </RectButtons>
          </Triple>
        </Row>
        <Row $in={10} $space={3} $h={26}>
          <IconSlot $w={18}>
            <Fold open />
          </IconSlot>
          锚点
        </Row>
        <AxisRow label="最小" child axes="XY" values={["0", "0"]} />
        <AxisRow label="最大" child axes="XY" values={["0", "0"]} />
        <AxisRow label="轴心" space={3} axes="XY" values={["0.5", "0.5"]} />
        <AxisRow label="旋转" space={12} wide axes="XYZ" values={["0", "0", "0"]} />
        <AxisRow label="缩放" wide axes="XYZ" values={["1", "1", "1"]} />
      </CompBody>

      <CompTitleBar
        title="Canvas"
        tick
        icon={
          <Icon s={20} h={18} viewBox="0 0 20 18" strokeWidth="1.2">
            <path d="M2 2H18V16H2Z" />
            <path d="M4.500 5H15.500V13H4.500ZM0 0H4V4H0ZM16 0H20V4H16ZM0 14H4V18H0ZM16 14H20V18H16Z" fill="currentColor" stroke="none" />
          </Icon>
        }
      />
      <CompBody>
        <Field label="渲染模式" kind="select" value="屏幕空间 - 覆盖" cjk />
        <Field label="像素完美" kind="check" child />
        <Field label="排序次序" kind="text" value="0" child />
        <Field label="目标显示" kind="select" value="Display 1" child />
        <Field label="附加着色器通道" kind="select" value="Nothing" />
        <Field label="顶点颜色始终使用伽玛" kind="check" />
      </CompBody>

      <CompTitleBar
        title="Canvas Scaler"
        tick
        icon={
          <Icon s={20} h={18} viewBox="0 0 20 18" strokeWidth="1.2">
            <path d="M15 1H2Q1 1 1 2V16Q1 17 2 17H18Q19 17 19 16V5" />
            <path d="M3.500 3H14L18 0H20V3L17 6V14.500H10V9.500H3.500Z" fill="currentColor" stroke="none" />
          </Icon>
        }
      />
      <CompBody $end={12}>
        <Field label="UI 缩放模式" kind="select" value="恒定像素大小" cjk />
        <Field label="缩放系数" kind="text" value="1" space={12} />
        <Field label="每单位参考像素" kind="text" value="100" />
      </CompBody>

      <CompTitleBar title="Graphic Raycaster" tick icon={<RayIcon />} />
      <CompBody>
        <Row>
          <RowLabel as="span" $w={182} $dim>
            脚本
          </RowLabel>
          <ObjectField>
            <RayIcon s={15} />
            GraphicRaycaster
          </ObjectField>
        </Row>
        <Field label="忽略保留图形" kind="check" value />
        <Field label="阻塞对象" kind="select" value="None" tall />
        <Field label="阻塞遮罩" kind="select" value="所有" tall cjk />
      </CompBody>
      <Rule />
      <AddComponent>添加组件</AddComponent>
    </Panel>
  );
};

/* ---------- status bar and floating widgets ---------- */

const StatusBar = styled.footer`
  height: 33px;
  padding: 3px 2px 0 0;
  display: flex;
  justify-content: flex-end;
`;

const StatusButton = styled.button`
  width: 39px;
  display: grid;
  place-items: center;
  background: none;
  border-left: 2px solid #242424;
`;

const ScrollPill = styled.div`
  position: fixed;
  right: 2px;
  top: 77px;
  width: 8px;
  height: 72px;
  border-radius: 4px;
  background: linear-gradient(#5a5a5a 30px, #6fc0ff 30px, #3c82ff);
`;

const UsbBubble = styled.button`
  position: fixed;
  right: 9px;
  top: 1005px;
  width: 76px;
  height: 76px;
  display: grid;
  place-items: center;
  border-radius: 50%;
  background: radial-gradient(circle, #e9eefb 43%, #dbe4fb 46%, #b3c5f8 71%);
`;

const menus = ["文件", "编辑", "资源", "游戏对象", "组件", "服务", "Jobs", "工具", "窗口", "帮助"];

const App = () => (
  <Screen>
    <GlobalStyle />
    <Edge>
      <EdgeTop />
      <EdgeMiddle />
      <EdgeBottom />
    </Edge>
    <Window>
      <TitleBar>
        <svg width="22" height="22" viewBox="0 0 22 22">
          <path d="M11 0L21 5V16L11 22L1 16V5Z" fill="#2b2b2b" />
          <path d="M11 0L21 5L11 10L1 5Z" fill="#777" />
          <path d="M5 7L9 5V8L7.500 9L11 11L14.500 9L13 8V5L17 7V14L15 15V11L12 13V17L14 16V18L11 19.500L8 18V16L10 17V13L7 11V15L5 14Z" fill="#fff" />
        </svg>
        <span>KeJiaGeneral_kJJJ - New Scene - Android - Unity 2022.3.57f1c1* &lt;DX11&gt;</span>
        <WindowButtons>
          <WindowButton aria-label="Minimize">
            <Icon s={16} viewBox="0 0 16 16" strokeWidth="1.3">
              <path d="M0 8H15" />
            </Icon>
          </WindowButton>
          <WindowButton aria-label="Restore">
            <Icon s={16} viewBox="0 0 16 16" strokeWidth="1.4">
              <path d="M1 5Q1 4 2 4H10Q11.500 4 11.500 5V14Q11.500 15 10 15H2Q1 15 1 14ZM4 1H12Q15 1 15 4V12" />
            </Icon>
          </WindowButton>
          <WindowButton aria-label="Close">
            <Icon s={16} viewBox="0 0 16 16" strokeWidth="1.4">
              <path d="M0 0L16 16M16 0L0 16" />
            </Icon>
          </WindowButton>
        </WindowButtons>
        <Monitor>
          <MonitorItem $first>
            GPU <b>0 %</b>
          </MonitorItem>
          <MonitorItem>
            CPU <b>5 %</b>
          </MonitorItem>
          <MonitorItem>
            延时 <b>N/A</b>
          </MonitorItem>
        </Monitor>
      </TitleBar>
      <MenuBar>
        {menus.map((name) => (
          <MenuItem key={name}>{name}</MenuItem>
        ))}
      </MenuBar>
      <MainBar>
        <BarGroup>
          <BarButton $w={93}>
            <svg width="18" height="18" viewBox="0 0 18 18">
              <circle cx="9" cy="9" r="9" fill="#c4c4c4" />
              <circle cx="9" cy="6" r="3" fill="#383838" />
              <path d="M3.500 13Q9 7.500 14.500 13Q9 17 3.500 13Z" fill="#383838" />
            </svg>
            PW
            <Down />
          </BarButton>
          <BarButton aria-label="Cloud">
            <svg width="21" height="15" viewBox="0 0 21 15">
              <path d="M4 15Q0 15 0 11Q0 8 4 7Q5 0 10.500 0Q15 0 16.500 5Q21 6.500 21 11Q21 15 17 15Z" fill="#c4c4c4" />
            </svg>
          </BarButton>
          <BarButton $w={44} aria-label="Version control">
            <Icon s={20} h={18} viewBox="0 0 20 18" strokeWidth="1.4">
              <circle cx="3" cy="4" r="2.300" />
              <circle cx="16.500" cy="4" r="2.300" />
              <circle cx="16.500" cy="14.500" r="2.300" />
              <path d="M5.500 4H14M9 4Q9 14.500 14 14.500" />
            </Icon>
          </BarButton>
        </BarGroup>
        <BarGroup $gap={2}>
          <BarButton aria-label="Play">
            <svg width="13" height="15" viewBox="0 0 13 15">
              <path d="M0 0L13 7.500L0 15Z" fill="#c4c4c4" />
            </svg>
          </BarButton>
          <BarButton aria-label="Pause">
            <svg width="12" height="15" viewBox="0 0 12 15">
              <path d="M0 0H4V15H0ZM8 0H12V15H8Z" fill="#c4c4c4" />
            </svg>
          </BarButton>
          <BarButton $w={44} $dim aria-label="Step">
            <svg width="15" height="15" viewBox="0 0 15 15">
              <path d="M0 0L11 7.500L0 15ZM12 0H14.500V15H12Z" fill="#9a9a9a" />
            </svg>
          </BarButton>
        </BarGroup>
        <BarGroup $end>
          <BarButton aria-label="History">
            <Icon s={19} viewBox="0 0 19 19" strokeWidth="1.8">
              <path d="M2 5.500A8 8 0 1 1 2 13.500M2 1V6H7M10 5V10H13.500" />
            </Icon>
          </BarButton>
          <BarButton aria-label="Search">
            <Lens s={18} />
          </BarButton>
          <Picker value="图层" name="Layers" $w={118} $h={28} $bg="#383838" $cjk />
          <Picker value="Layout" $w={118} $h={28} $bg="#383838" />
        </BarGroup>
      </MainBar>
      <Panels>
        <Column>
          <ScenePanel />
          <GamePanel />
        </Column>
        <HierarchyPanel />
        <ProjectPanel />
        <InspectorPanel />
      </Panels>
      <StatusBar>
        <StatusButton aria-label="Debugger off">
          <Bug off />
        </StatusButton>
        <StatusButton aria-label="Cache server off">
          <svg width="21" height="21" viewBox="0 0 21 21" fill="#c4c4c4">
            <path d="M2 4Q2 0 10.500 0Q19 0 19 4V5Q19 9 10.500 9Q2 9 2 5ZM2 9Q10 14 19 9V12Q17 15 10.500 15Q3 15 2 12ZM2 15Q10 19 19 15V18Q17 21 10.500 21Q3 21 2 18Z" />
            <path d="M2 0L21 20" stroke="#191919" strokeWidth="2.500" />
            <path d="M0 0L20 21" stroke="#c4c4c4" strokeWidth="1.500" />
          </svg>
        </StatusButton>
        <StatusButton aria-label="Lighting off">
          <Icon s={21} viewBox="0 0 21 21">
            <path d="M10.500 3A4.500 5 0 0 1 13 12V15H8V12A4.500 5 0 0 1 10.500 3Z" fill="currentColor" />
            <path d="M8.500 18H12.500" strokeWidth="3" />
            <path d="M5 2Q1 5 1 10Q1 15 5 19M16 2Q20 5 20 10Q20 15 16 19M1 19H6V14M20 1H15V6" />
            <path d="M3 0L21 19" stroke="#191919" strokeWidth="2.500" />
            <path d="M1 0L20 21" />
          </Icon>
        </StatusButton>
        <StatusButton aria-label="No background tasks">
          <Icon s={21} viewBox="0 0 21 21">
            <circle cx="10.500" cy="10.500" r="9.500" />
            <path d="M6.500 10.500L9.500 13.500L15 7.500" strokeWidth="2" />
          </Icon>
        </StatusButton>
      </StatusBar>
    </Window>
    <ScrollPill />
    <UsbBubble aria-label="USB drive">
      <svg width="30" height="44" viewBox="0 0 30 44">
        <defs>
          <linearGradient id="usb-body" x1="0" y1="0" x2="1" y2="1">
            <stop offset="0" stopColor="#88a8ff" />
            <stop offset="1" stopColor="#3566f0" />
          </linearGradient>
        </defs>
        <rect x="6" y="0" width="18" height="12" fill="#b9bcc6" />
        <rect x="10" y="4" width="3" height="3" fill="#5d6070" />
        <rect x="16" y="4" width="3" height="3" fill="#5d6070" />
        <path d="M1 11Q1 9 3 9H27Q29 9 29 11V29Q29 43 15 43Q1 43 1 29Z" fill="url(#usb-body)" />
      </svg>
    </UsbBubble>
  </Screen>
);

export default App;
